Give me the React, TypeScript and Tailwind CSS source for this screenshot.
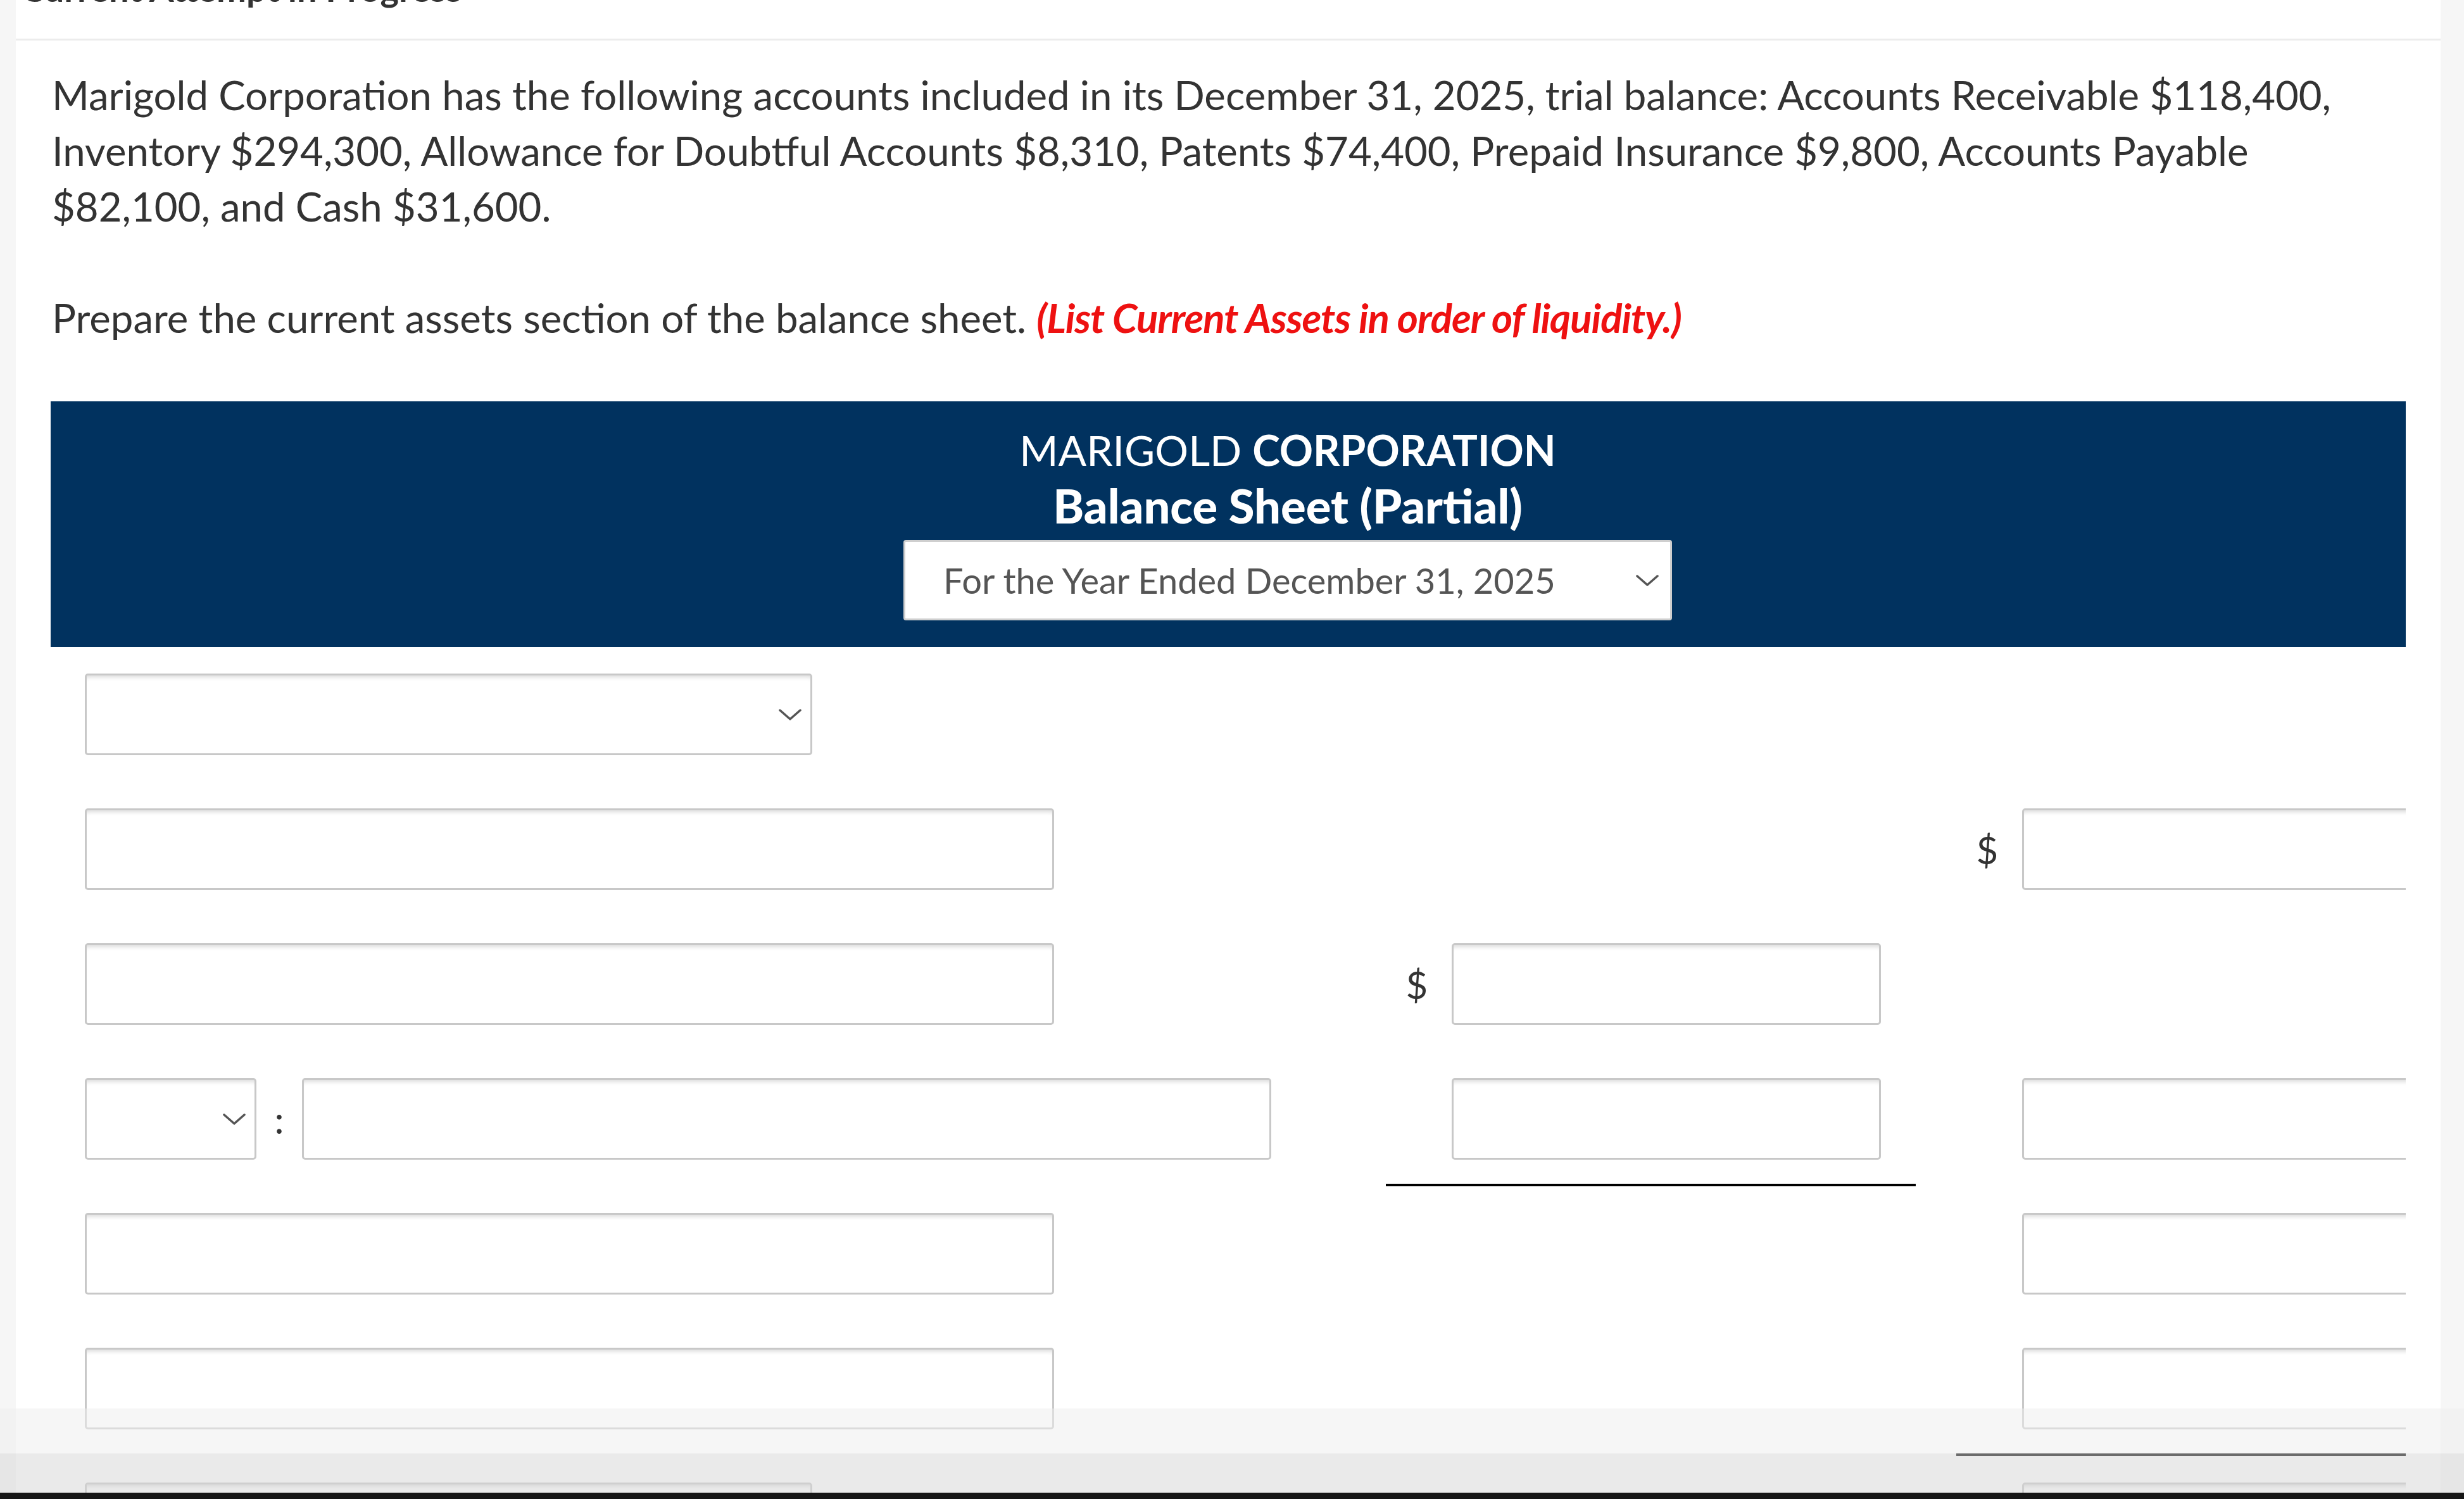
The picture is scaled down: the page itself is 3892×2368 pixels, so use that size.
import React from 'react';

type CellA = 'select' | 'input' | 'split' | 'none';
type CellNum = { dollar?: boolean; underline?: boolean } | null;

interface Row {
  a: CellA;
  b: CellNum;
  c: CellNum;
}

const rows: Row[] = [
  { a: 'select', b: null, c: null },
  { a: 'input', b: null, c: { dollar: true } },
  { a: 'input', b: { dollar: true }, c: null },
  { a: 'split', b: { underline: true }, c: {} },
  { a: 'input', b: null, c: {} },
  { a: 'input', b: null, c: { underline: true } },
  { a: 'select', b: null, c: {} },
];

const box =
  'h-[129px] bg-white border-[3px] border-[#c8c8c8] rounded-[5px] shadow-[inset_0_8px_6px_-5px_rgba(0,0,0,0.14)]';

const Chevron = () => (
  <svg width="36" height="20" viewBox="0 0 36 20" className="shrink-0">
    <polyline points="2,3 18,17 34,3" fill="none" stroke="#555555" strokeWidth="3.5" strokeLinecap="round" strokeLinejoin="round" />
  </svg>
);

const LeftCell = ({ kind }: { kind: CellA }) => {
  if (kind === 'none') return <div />;
  if (kind === 'select') {
    return (
      <div className="pl-[54px]">
        <div className={`${box} w-[1149px] flex items-center justify-end pr-[14px]`}>
          <Chevron />
        </div>
      </div>
    );
  }
  if (kind === 'split') {
    return (
      <div className="pl-[54px] flex items-start">
        <div className={`${box} w-[271px] flex items-center justify-end pr-[14px]`}>
          <Chevron />
        </div>
        <div className="w-[72px] h-[129px] flex items-center justify-center text-[60px] text-[#333]">:</div>
        <div className={`${box} w-[1531px]`} />
      </div>
    );
  }
  return (
    <div className="pl-[54px]">
      <div className={`${box} w-[1531px]`} />
    </div>
  );
};

const NumCell = ({ cell }: { cell: CellNum }) => {
  if (!cell) return <div />;
  return (
    <div className="flex flex-col">
      <div className="flex items-start">
        <div className="w-[104px] h-[129px] flex items-center justify-center text-[60px] text-[#333] pr-[6px]">
          {cell.dollar ? '$' : ''}
        </div>
        <div className={`${box} w-[678px]`} />
      </div>
      {cell.underline && <div className="mt-[38px] h-[4px] bg-black w-full" />}
    </div>
  );
};

export default function App() {
  return (
    <div className="relative w-[3892px] h-[2368px] overflow-hidden bg-[#f6f6f6] font-['Lato',sans-serif] text-[#333333]">
      <div className="ml-[25px] w-[3830px] h-full bg-white">
        {/* cut-off page title */}
        <div className="h-[64px] overflow-hidden border-b-[3px] border-[#ececec] pl-[8px]">
          <div className="mt-[-46px] text-[56px] leading-[56px] font-bold text-[#333]">Current Attempt in Progress</div>
        </div>

        <div className="pl-[57px] pt-[42px]">
          <p className="text-[63.5px] leading-[88px] w-[3740px]">
            Marigold Corporation has the following accounts included in its December 31, 2025, trial balance: Accounts Receivable $118,400,
            <br />
            Inventory $294,300, Allowance for Doubtful Accounts $8,310, Patents $74,400, Prepaid Insurance $9,800, Accounts Payable
            <br />
            $82,100, and Cash $31,600.
          </p>
          <p className="mt-[88px] text-[63.5px] leading-[88px]">
            Prepare the current assets section of the balance sheet.{' '}
            <span className="font-bold italic text-[#ee1111] tracking-[-1px]">(List Current Assets in order of liquidity.)</span>
          </p>

          <div className="mt-[88px] ml-[-2px] w-[3720px] overflow-hidden">
            <div className="w-[3908px]">
              <div className="bg-[#01325f] text-white flex flex-col items-center pt-[33px] pb-[42px]">
                <div className="text-[66px] leading-[88px]">
                  MARIGOLD <span className="font-bold">CORPORATION</span>
                </div>
                <div className="text-[74px] leading-[88px] font-black">Balance Sheet (Partial)</div>
                <div className="mt-[10px] w-[1214px] h-[127px] bg-white border-[3px] border-[#cfcfcf] rounded-[4px] flex items-center justify-between pl-[60px] pr-[18px] text-[56px] text-[#555555]">
                  <span>For the Year Ended December 31, 2025</span>
                  <Chevron />
                </div>
              </div>

              <div className="pt-[42px] grid grid-cols-[2045px_837px_837px] gap-x-[64px] auto-rows-[213px]">
                {rows.map((r, i) => (
                  <React.Fragment key={i}>
                    <LeftCell kind={r.a} />
                    <NumCell cell={r.b} />
                    <NumCell cell={r.c} />
                  </React.Fragment>
                ))}
              </div>
            </div>
          </div>
        </div>
      </div>

      {/* translucent bottom bar over the page */}
      <div className="absolute inset-x-0 bottom-0 flex flex-col">
        <div className="h-[71px] bg-[#eeeeee]/50" />
        <div className="h-[62px] bg-[#d6d6d6]/50" />
        <div className="h-[10px] bg-[#161616]" />
      </div>
    </div>
  );
}
